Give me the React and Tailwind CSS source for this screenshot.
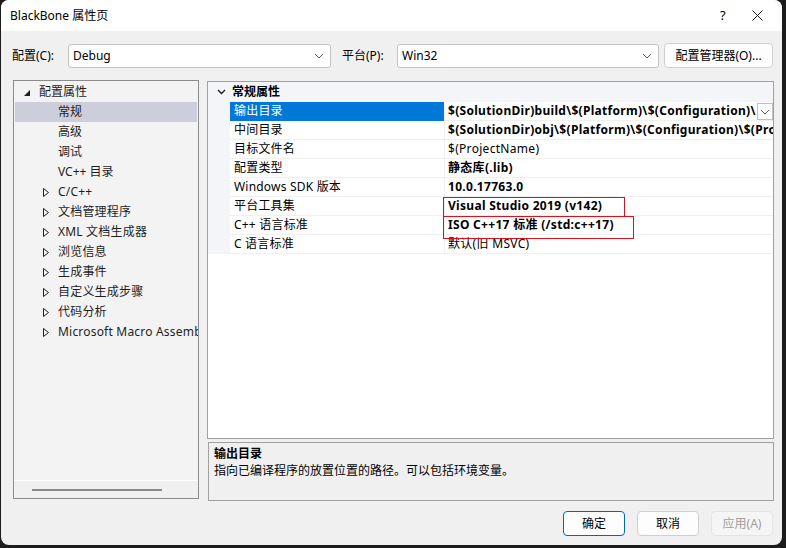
import React from "react";

const font = "font-['Noto_Sans','Noto_Sans_CJK_SC',sans-serif]";

function Chevron({ className = "" }) {
  return (
    <svg width="10" height="6" viewBox="0 0 10 6" className={className}>
      <polyline points="1,1 5,5 9,1" fill="none" stroke="#606060" strokeWidth="1" />
    </svg>
  );
}

function Select({ value, width }) {
  return (
    <div
      className={`h-[24px] ${width} bg-white border border-[#c4c4c4] rounded-[3px] flex items-center pl-[4px] pr-[6px]`}
    >
      <span className="flex-1 text-[12px] leading-none text-black">{value}</span>
      <Chevron />
    </div>
  );
}

function ClosedArrow() {
  return (
    <svg width="6" height="9" viewBox="0 0 6 9">
      <polygon points="0.5,0.5 5.5,4.5 0.5,8.5" fill="none" stroke="#1e1e1e" strokeWidth="1" />
    </svg>
  );
}

function OpenArrow() {
  return (
    <svg width="6" height="6" viewBox="0 0 6 6">
      <polygon points="6,0 6,6 0,6" fill="#1e1e1e" />
    </svg>
  );
}

const children = ["常规", "高级", "调试", "VC++ 目录"];
const groups = [
  "C/C++",
  "文档管理程序",
  "XML 文档生成器",
  "浏览信息",
  "生成事件",
  "自定义生成步骤",
  "代码分析",
  "Microsoft Macro Assembler",
];

const props = [
  { k: "输出目录", v: "$(SolutionDir)build\\$(Platform)\\$(Configuration)\\", bold: true, sel: true },
  { k: "中间目录", v: "$(SolutionDir)obj\\$(Platform)\\$(Configuration)\\$(ProjectName)\\", bold: true },
  { k: "目标文件名", v: "$(ProjectName)" },
  { k: "配置类型", v: "静态库(.lib)", bold: true },
  { k: "Windows SDK 版本", v: "10.0.17763.0", bold: true },
  { k: "平台工具集", v: "Visual Studio 2019 (v142)", bold: true },
  { k: "C++ 语言标准", v: "ISO C++17 标准 (/std:c++17)", bold: true },
  { k: "C 语言标准", v: "默认(旧 MSVC)" },
];

function Button({ children, primary, disabled }) {
  return (
    <div
      className={`w-[62px] h-[25px] rounded-[4px] flex items-center justify-center text-[12px] leading-none ${
        primary
          ? "border border-[#0067c0] bg-[#fdfdfd] text-black"
          : disabled
          ? "border border-[#e5e5e5] bg-[#f5f5f5] text-[#a0a0a0]"
          : "border border-[#d0d0d0] bg-[#fdfdfd] text-black"
      }`}
    >
      {children}
    </div>
  );
}

export default function App() {
  return (
    <div className={`w-[786px] h-[548px] bg-[#1c1c1c] pl-[1px] ${font}`}>
      <div className="w-[781px] h-[545px] bg-[#f0f0f0] rounded-[8px] overflow-hidden flex flex-col">
        {/* title bar */}
        <div className="h-[31px] bg-white flex items-center pl-[9px] shrink-0">
          <span className="text-[12px] leading-none text-black flex-1">BlackBone 属性页</span>
          <span className="text-[13px] leading-none text-black w-[14px]">?</span>
          <div className="w-[46px] flex justify-center mr-[2px]">
            <svg width="11" height="11" viewBox="0 0 11 11">
              <path d="M0.5 0.5 L10.5 10.5 M10.5 0.5 L0.5 10.5" stroke="#1a1a1a" strokeWidth="1" />
            </svg>
          </div>
        </div>

        {/* configuration row */}
        <div className="flex items-center mt-[12px] pl-[11px] h-[25px] shrink-0">
          <span className="w-[56px] text-[12px] leading-none text-black">配置(C):</span>
          <Select value="Debug" width="w-[263px]" />
          <span className="ml-[11px] w-[55px] text-[12px] leading-none text-black">平台(P):</span>
          <Select value="Win32" width="w-[262px]" />
          <div className="ml-[5px] w-[109px] h-[25px] bg-[#fdfdfd] border border-[#d0d0d0] rounded-[4px] flex items-center justify-center text-[12px] leading-none text-black">
            配置管理器(O)...
          </div>
        </div>

        {/* main area */}
        <div className="flex mt-[12px] pl-[12px]">
          {/* category tree */}
          <div className="w-[186px] h-[419px] border border-[#8c8c8c] bg-[#f3f3f3] flex flex-col">
            <div className="flex-1 pt-[1px] overflow-hidden">
              <div className="h-[20px] flex items-center">
                <div className="w-[25px] shrink-0 flex justify-start pl-[10px] pt-[1px]">
                  <OpenArrow />
                </div>
                <span className="text-[12px] leading-none text-[#1e1e1e]">配置属性</span>
              </div>
              {children.map((c, i) => (
                <div
                  key={c}
                  className={`h-[20px] flex items-center mx-[1px] pl-[43px] ${i === 0 ? "bg-[#cccedb]" : ""}`}
                >
                  <span className="text-[12px] leading-none text-[#1e1e1e] whitespace-nowrap">{c}</span>
                </div>
              ))}
              {groups.map((g) => (
                <div key={g} className="h-[20px] flex items-center overflow-hidden">
                  <div className="w-[44px] shrink-0 flex justify-end pr-[9px]">
                    <ClosedArrow />
                  </div>
                  <span className="text-[12px] leading-none text-[#1e1e1e] whitespace-nowrap tracking-[0.2px]">
                    {g}
                  </span>
                </div>
              ))}
            </div>
            <div className="h-[18px] border-t border-white bg-[#f0f0f0] flex items-center pl-[18px]">
              <div className="w-[130px] h-[2px] bg-[#8a8a8a]" />
            </div>
          </div>

          {/* property grid + description */}
          <div className="ml-[8px] flex flex-col">
            <div className="w-[567px] h-[358px] border border-[#a0a0a0] bg-white mt-[1px] relative overflow-hidden">
              <div className="h-[20px] bg-[#f3f5f9] flex items-center">
                <div className="w-[24px] flex justify-center pl-[2px]">
                  <svg width="9" height="6" viewBox="0 0 9 6">
                    <polyline points="1,1 4.5,4.5 8,1" fill="none" stroke="#1e1e1e" strokeWidth="1.4" />
                  </svg>
                </div>
                <span className="text-[12px] leading-none font-bold text-black">常规属性</span>
              </div>
              {props.map((p) => (
                <div key={p.k} className="h-[19px] flex">
                  <div className="w-[22px] bg-[#f3f5f9] shrink-0" />
                  <div
                    className={`w-[214px] shrink-0 flex items-center pl-[4px] border-b ${
                      p.sel ? "bg-[#0078d7] text-white border-[#0078d7]" : "text-black border-[#f0f0f0]"
                    }`}
                  >
                    <span className="text-[12px] leading-none whitespace-nowrap tracking-[0.2px]">{p.k}</span>
                  </div>
                  <div className="flex-1 min-w-0 flex items-center pl-[3px] border-l border-b border-[#f0f0f0] relative overflow-hidden">
                    <span
                      className={`text-[12px] leading-none whitespace-nowrap text-black tracking-[0.3px] ${
                        p.bold ? "font-bold" : ""
                      }`}
                    >
                      {p.v}
                    </span>
                    {p.sel && (
                      <div className="absolute right-0 top-[1px] w-[16px] h-[17px] bg-white border border-[#c0c0c0] flex items-center justify-center">
                        <Chevron />
                      </div>
                    )}
                  </div>
                </div>
              ))}
              {/* highlighted settings */}
              <div className="absolute left-[235px] top-[115px] w-[182px] h-[20px] border border-[#e0101a]" />
              <div className="absolute left-[235px] top-[134px] w-[191px] h-[23px] border border-[#e0101a]" />
            </div>

            <div className="w-[566px] h-[59px] mt-[3px] ml-[1px] border border-[#a0a0a0] bg-[#f0f0f0] pl-[5px] pt-[3px]">
              <div className="text-[12px] leading-[16px] font-bold text-black">输出目录</div>
              <div className="text-[12px] leading-[18px] text-black">
                指向已编译程序的放置位置的路径。可以包括环境变量。
              </div>
            </div>
          </div>
        </div>

        {/* dialog buttons */}
        <div className="flex justify-end mt-[10px] pr-[9px] gap-[12px]">
          <Button primary>确定</Button>
          <Button>取消</Button>
          <Button disabled>应用(A)</Button>
        </div>
      </div>
    </div>
  );
}
